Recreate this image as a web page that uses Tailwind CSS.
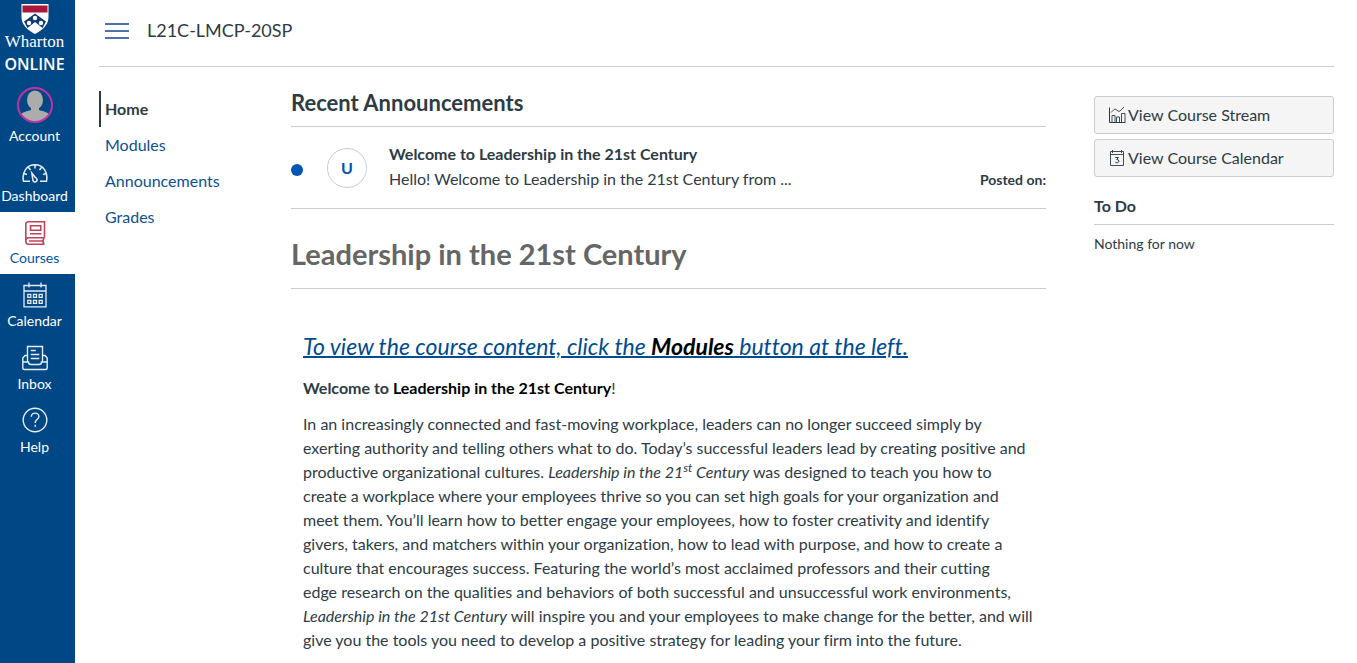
<!DOCTYPE html>
<html lang="en">
<head>
  <meta charset="UTF-8">
  <meta name="viewport" content="width=device-width, initial-scale=1.0">
  <title>L21C-LMCP-20SP</title>
  <script src="https://cdn.jsdelivr.net/npm/@tailwindcss/browser@4"></script>
</head>
<body class="min-h-screen bg-white font-['Lato',sans-serif] text-base text-[#2d3b45] [font-variant-ligatures:none]">

  <div class="flex min-h-screen">

    <!-- Global navigation -->
    <nav class="w-[75px] shrink-0 bg-[#004785] text-sm text-white" aria-label="Global">
      <a href="#" class="flex h-[79px] w-[69px] flex-col items-center pt-1">
        <svg class="h-[30px] w-7" viewBox="0 0 28 30" aria-hidden="true">
          <path d="M.5 0h27v13c0 8-6 13-13.500 17C6.500 26 .5 21 .5 13z" fill="#fff"/>
          <path d="M1.500 1.500h25v7h-25z" fill="#a9173d"/>
          <path d="M3 17.500 14 9.500l11 8-3.500 6.500L14 18l-7.500 6z" fill="#0f3c78"/>
          <g fill="#fff"><circle cx="14" cy="14" r="2.200"/><circle cx="8" cy="19" r="2.200"/><circle cx="20" cy="19" r="2.200"/></g>
          <path d="m14 20.500 3.500 3-3.500 3-3.500-3z" fill="#fff"/>
        </svg>
        <span class="font-['Liberation_Serif',serif] text-[17px] leading-4">Wharton</span>
        <span class="mt-1 font-['Open_Sans',sans-serif] text-base leading-5 font-semibold">ONLINE</span>
      </a>
      <a href="#" class="flex h-[71px] w-[69px] flex-col items-center pt-2">
        <svg class="size-9" viewBox="0 0 36 36" aria-hidden="true">
          <defs><clipPath id="avatar"><circle cx="18" cy="18" r="17"/></clipPath></defs>
          <g clip-path="url(#avatar)" fill="#acacac">
            <ellipse cx="18" cy="13" rx="8" ry="9.500"/>
            <path d="M14 19h8v4c4 1.500 9 1.500 11.500 6v7h-31v-7C5 24.500 10 24.500 14 23z"/>
          </g>
          <circle cx="18" cy="18" r="17" fill="none" stroke="#bf32a4" stroke-width="2"/>
        </svg>
        <span class="mt-[3px]">Account</span>
      </a>
      <a href="#" class="flex h-[62px] w-[69px] flex-col items-center pt-[10px]">
        <svg class="size-[26px]" viewBox="0 0 26 26" fill="none" stroke="#e6edf3" stroke-width="1.500" aria-hidden="true">
          <path d="M8 21.300H1.500C-.5 12 5 4.800 13 4.800S26.500 12 24.500 21.300H18M13 5v3.500M6.500 7.500l2 2.500M19.500 7.500l-2 2.500M2 13.500l3 1M24 13.500l-3 1"/>
          <path d="m9.800 13 1.200 7.500c.7 2.500 4.500 1.500 4-1.200-.2-1-1-1.600-1.800-2z"/>
        </svg>
        <span>Dashboard</span>
      </a>
      <a href="#" class="block h-[62px] bg-white text-[#0055a2]" aria-current="page">
        <span class="flex w-[69px] flex-col items-center pt-2">
          <svg class="size-[26px]" viewBox="0 0 26 26" fill="none" stroke="#bd4459" stroke-width="1.600" aria-hidden="true">
            <path d="M22.500 17.800V1.700H6.500Q3.800 1.700 3.800 4.500v16.500q0 3.300 3 3.300h15.700M22.500 17.800H7Q3.800 17.800 3.800 21M22 17.800q-2 3.200 0 6.500M7 21h14"/>
            <path d="M8.500 5.700h10.300v4.500H8.500zM8 13.800h11.500"/>
          </svg>
          <span class="mt-[2px]">Courses</span>
        </span>
      </a>
      <a href="#" class="flex h-[63px] w-[69px] flex-col items-center pt-2">
        <svg class="size-[26px]" viewBox="0 0 26 26" fill="none" stroke="#e6edf3" stroke-width="1.300" aria-hidden="true">
          <path d="M2 3.500h22v21.300H2zM2 9h22M7 .5v5M19 .5v5"/>
          <path d="M5.800 12.300h3v3h-3zM11.500 12.300h3v3h-3zM17.200 12.300h3v3h-3zM5.800 18.300h3v3h-3zM11.500 18.300h3v3h-3zM17.200 18.300h3v3h-3z"/>
        </svg>
        <span class="mt-[3px]">Calendar</span>
      </a>
      <a href="#" class="flex h-[63px] w-[69px] flex-col items-center pt-2">
        <svg class="size-[26px]" viewBox="0 0 26 26" fill="none" stroke="#e6edf3" stroke-width="1.400" aria-hidden="true">
          <path d="M5.500 17V1.500h15V17M8.800 5.500h5M8.800 9.500h8.500M8.800 13.500h8.500"/>
          <path d="M5.500 10.500H3L.8 13v10q0 1.500 1.500 1.500h21.400q1.500 0 1.500-1.500V13L23 10.500h-2.500M.8 17h5.700q0 2.500 2.500 2.500h8q2.500 0 2.500-2.500h5.700"/>
        </svg>
        <span class="mt-[3px]">Inbox</span>
      </a>
      <a href="#" class="flex h-[63px] w-[69px] flex-col items-center pt-[7px]">
        <svg class="size-[26px]" viewBox="0 0 26 26" fill="none" stroke="#e6edf3" stroke-width="1.400" aria-hidden="true">
          <circle cx="13" cy="13" r="11.800"/>
          <path d="M9.300 9.800c0-5 7.600-4.600 7.600-.4 0 3.100-3.700 2.800-3.700 6.600M13.200 17.800v2"/>
        </svg>
        <span class="mt-1">Help</span>
      </a>
    </nav>

    <div class="ml-6 mr-[23px] min-w-0 flex-1">

      <!-- Breadcrumb bar -->
      <header class="flex h-[67px] items-center border-b border-[#c7cdd1] pb-1">
        <button class="ml-[6px] flex w-6 flex-col gap-[5px]" aria-label="Toggle course navigation">
          <span class="h-[2px] w-full bg-[#4a74a8]"></span>
          <span class="h-[2px] w-full bg-[#4a74a8]"></span>
          <span class="h-[2px] w-full bg-[#4a74a8]"></span>
        </button>
        <span class="ml-[18px] pb-[2px] text-lg">L21C-LMCP-20SP</span>
      </header>

      <div class="flex">

        <!-- Course navigation -->
        <nav class="w-48 shrink-0 pt-6 leading-9 text-[#0f4f8f]" aria-label="Course">
          <a href="#" class="block border-l-2 border-[#2d3b45] pl-1 font-bold text-[#2d3b45]" aria-current="page">Home</a>
          <a href="#" class="block pl-[6px]">Modules</a>
          <a href="#" class="block pl-[6px]">Announcements</a>
          <a href="#" class="block pl-[6px]">Grades</a>
        </nav>

        <!-- Main content -->
        <main class="min-w-0 flex-1">
          <h2 class="border-b border-[#c7cdd1] pt-5 pb-2 text-[22px] leading-[31px] font-bold">Recent Announcements</h2>

          <a href="#" class="flex h-[82px] border-b border-[#c7cdd1]">
            <span class="mt-[37px] size-3 rounded-full bg-[#0057b3]"></span>
            <span class="ml-6 mt-[21px] flex size-10 items-center justify-center rounded-full border border-[#c7cdd1] font-bold text-[#0057a8]">U</span>
            <span class="ml-[22px] flex-1 pt-[15px]">
              <span class="block font-bold">Welcome to Leadership in the 21st Century</span>
              <span class="block leading-[25px]">Hello! Welcome to Leadership in the 21st Century from ...</span>
            </span>
            <span class="mt-[43px] text-sm font-bold">Posted on:</span>
          </a>

          <h1 class="border-b border-[#c7cdd1] pt-6 pb-[13px] text-[29px] leading-[42px] font-bold text-[#666]">Leadership in the 21st Century</h1>

          <div class="px-3 pt-[39px]">
            <h2 class="text-[23px] leading-9"><a href="#" class="text-[#004b8f] italic underline decoration-2">To view the course content, click the <strong class="text-black">Modules</strong> button at the left.</a></h2>
            <p class="mt-3 leading-6"><strong>Welcome to <span class="text-black">Leadership in the 21st Century</span></strong>!</p>
            <p class="mt-3 leading-6">In an increasingly connected and fast-moving workplace, leaders can no longer succeed simply by exerting authority and telling others what to do. Today’s successful leaders lead by creating positive and productive organizational cultures. <em>Leadership in the 21<sup>st</sup> Century</em> was designed to teach you how to create a workplace where your employees thrive so you can set high goals for your organization and meet them. You’ll learn how to better engage your employees, how to foster creativity and identify givers, takers, and matchers within your organization, how to lead with purpose, and how to create a culture that encourages success. Featuring the world’s most acclaimed professors and their cutting<br> edge research on the qualities and behaviors of both successful and unsuccessful work environments, <em>Leadership in the 21st Century</em> will inspire you and your employees to make change for the better, and will give you the tools you need to develop a positive strategy for leading your firm into the future.</p>
          </div>
        </main>

        <!-- Right sidebar -->
        <aside class="ml-12 w-60 shrink-0 pt-[29px]">
          <button class="flex h-[38px] w-full items-center rounded-[3px] border border-[#c7cdd1] bg-[#f5f5f5] pl-[13px]">
            <svg class="mr-[2px] size-[18px]" viewBox="0 0 18 18" fill="none" stroke="#2d3b45" aria-hidden="true">
              <path d="M1.500 1.500v15h16"/>
              <path d="M4 16V9.500h3V16M8.500 16v-5h3v5M13.500 16V7.500h3.500V16" stroke-width=".9"/>
              <path d="m3 6.500 3-3q1-.8 2 0l2 1.500q1 .8 2 0l4-4" stroke-width=".9"/>
            </svg>
            View Course Stream
          </button>
          <button class="mt-[5px] flex h-[38px] w-full items-center rounded-[3px] border border-[#c7cdd1] bg-[#f5f5f5] pl-[13px]">
            <svg class="mr-[2px] size-[18px]" viewBox="0 0 18 18" fill="none" stroke="#2d3b45" aria-hidden="true">
              <path d="M2.500 2.500h13v14h-13zM2.500 5.500h13M4.500 1v3M13.500 1v3" stroke-width=".9"/>
              <path d="M7.300 8.500h3.200L8.700 10.500q2.200 0 2.200 1.700c0 1.900-2.700 2-3.700.8"/>
            </svg>
            View Course Calendar
          </button>
          <h2 class="mt-[17px] border-b border-[#c7cdd1] pb-[6px] font-bold">To Do</h2>
          <p class="mt-[9px] text-sm">Nothing for now</p>
        </aside>

      </div>
    </div>

  </div>

</body>
</html>
